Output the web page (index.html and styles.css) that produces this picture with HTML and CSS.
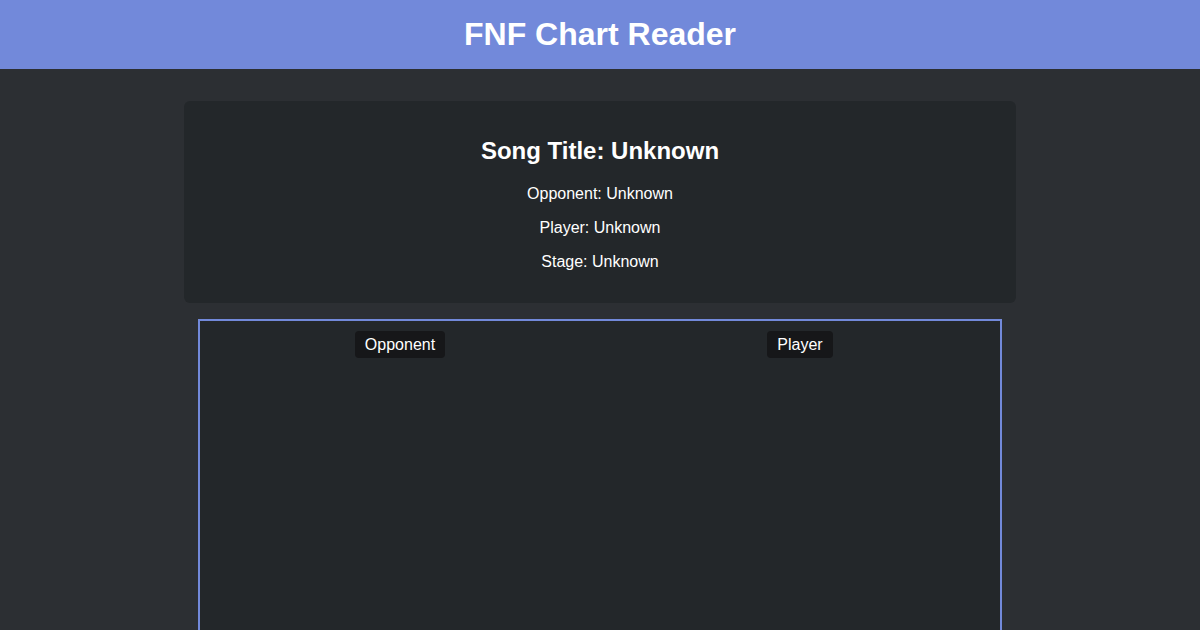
FILE: index.html
```html
<!DOCTYPE html>
<html lang="en">
<head>
<meta charset="utf-8">
<title>FNF Chart Reader</title>
<link rel="stylesheet" href="styles.css">
</head>
<body>
  <header class="top-bar">
    <h1 class="app-title">FNF Chart Reader</h1>
  </header>
  <main class="content">
    <section class="song-info">
      <h2 class="song-title">Song Title: Unknown</h2>
      <p class="song-meta">Opponent: Unknown</p>
      <p class="song-meta">Player: Unknown</p>
      <p class="song-meta">Stage: Unknown</p>
    </section>
    <section class="chart">
      <div class="lane">
        <span class="lane-label">Opponent</span>
      </div>
      <div class="lane">
        <span class="lane-label">Player</span>
      </div>
    </section>
  </main>
</body>
</html>
```

FILE: styles.css
```css
* {
  box-sizing: border-box;
}

html,
body {
  margin: 0;
  padding: 0;
}

body {
  background: #2c2f33;
  color: #ffffff;
  font-family: "Liberation Sans", Arial, sans-serif;
  overflow: hidden;
}

.top-bar {
  background: #7289da;
  padding: 16px 0;
  text-align: center;
}

.app-title {
  margin: 0;
  font-size: 32px;
  line-height: 37px;
  font-weight: bold;
}

.content {
  display: flex;
  flex-direction: column;
  align-items: center;
  padding-top: 32px;
}

.song-info {
  width: 832px;
  background: #23272a;
  border-radius: 6px;
  padding: 16px;
  text-align: center;
}

.song-title {
  margin: 20px 0;
  font-size: 24px;
  line-height: 28px;
  font-weight: bold;
}

.song-meta {
  margin: 16px 0;
  font-size: 16px;
  line-height: 18px;
}

.chart {
  margin-top: 16px;
  width: 804px;
  height: 600px;
  border: 2px solid #7289da;
  background: #23272a;
  display: grid;
  grid-template-columns: 1fr 1fr;
}

.lane {
  display: flex;
  justify-content: center;
  align-items: flex-start;
  padding-top: 10px;
}

.lane-label {
  background: #161719;
  border-radius: 4px;
  padding: 4px 10px;
  font-size: 16px;
  line-height: 19px;
}
```
